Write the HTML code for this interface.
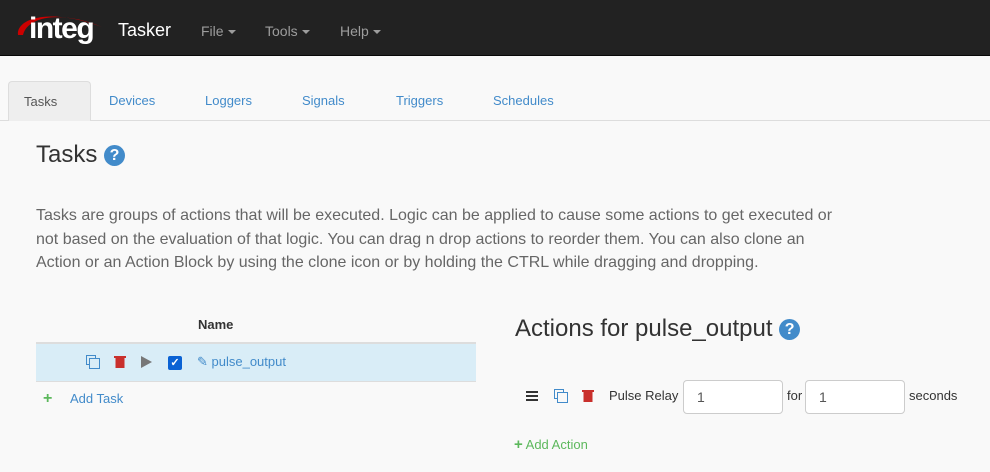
<!DOCTYPE html>
<html><head><style>
*{box-sizing:border-box;margin:0;padding:0}
body{width:990px;height:472px;overflow:hidden;background:#f9f9f9;font-family:"Liberation Sans",Arial,sans-serif;position:relative}
.nav{position:absolute;left:0;top:0;width:990px;height:56px;background:#222;border-bottom:1px solid #080808}
.nav span{position:absolute;color:#9d9d9d;font-size:14px;top:23px}
.caret{display:inline-block;width:0;height:0;border-left:4px solid transparent;border-right:4px solid transparent;border-top:4px solid #9d9d9d;vertical-align:middle;margin-left:4px}
.tabs{position:absolute;left:0;top:120px;width:990px;border-top:1px solid #ddd}
.tab{position:absolute;top:93px;font-size:13px;color:#428bca}
.a{position:absolute}
.blue{color:#428bca}
.help{display:inline-block;width:21px;height:21px;border-radius:50%;background:#428bca;color:#fff;font-weight:bold;font-size:16px;text-align:center;line-height:21px;vertical-align:2px}
input{position:absolute;height:34px;border:1px solid #ccc;border-radius:4px;background:#fff;font:14px "Liberation Sans",sans-serif;padding-left:13px;color:#555}
</style></head><body>
<div class="nav">
<svg class="a" style="left:14px;top:5px" width="90" height="44" viewBox="0 0 90 44"><path d="M4 30 C2 14 34 2 88 22 C50 6 14 10 9 30 Z" fill="#c00"/></svg>
<div class="a" style="left:29px;top:12px;color:#fff;font-size:30px;font-weight:bold;letter-spacing:-1.5px">integ</div>
<div class="a" style="left:118px;top:20px;color:#fff;font-size:18px">Tasker</div>
<span style="left:201px">File<i class="caret"></i></span>
<span style="left:265px">Tools<i class="caret"></i></span>
<span style="left:340px">Help<i class="caret"></i></span>
</div>
<div class="tabs"></div>
<div class="a" style="left:8px;top:81px;width:83px;height:40px;background:#eee;border:1px solid #ddd;border-bottom:none;border-radius:4px 4px 0 0;font-size:13px;color:#555;padding:12px 0 0 15px">Tasks</div>
<div class="tab" style="left:109px">Devices</div>
<div class="tab" style="left:205px">Loggers</div>
<div class="tab" style="left:302px">Signals</div>
<div class="tab" style="left:396px">Triggers</div>
<div class="tab" style="left:493px">Schedules</div>
<div class="a" style="left:36px;top:141px;font-size:24px;color:#333">Tasks <span class="help">?</span></div>
<div class="a" style="left:36px;top:204px;width:810px;font-size:16px;line-height:23.5px;color:#666">Tasks are groups of actions that will be executed. Logic can be applied to cause some actions to get executed or not based on the evaluation of that logic. You can drag n drop actions to reorder them. You can also clone an Action or an Action Block by using the clone icon or by holding the CTRL while dragging and dropping.</div>
<div class="a" style="left:198px;top:317px;font-size:13px;font-weight:bold;color:#333">Name</div>
<div class="a" style="left:36px;top:342px;width:440px;height:40px;background:#d9edf7;border-top:2px solid #ddd;border-bottom:1px solid #ddd"></div>
<svg class="a" style="left:86px;top:355px" width="14" height="14"><rect x="0.5" y="0.5" width="9" height="9" fill="none" stroke="#428bca"/><rect x="3.5" y="3.5" width="10" height="10" fill="#d9edf7" stroke="#428bca"/></svg>
<svg class="a" style="left:114px;top:355px" width="12" height="13"><rect x="0" y="1" width="12" height="2" fill="#c9302c"/><rect x="1.5" y="3" width="9" height="10" fill="#c9302c"/></svg>
<svg class="a" style="left:141px;top:356px" width="11" height="12"><path d="M0 0 L11 6 L0 12Z" fill="#777"/></svg>
<div class="a" style="left:168px;top:356px;width:14px;height:14px;background:#0a62d4;border-radius:2px;color:#fff;font-size:11px;text-align:center;line-height:14px;font-weight:bold">✓</div>
<div class="a blue" style="left:197px;top:354px;font-size:13px">✎ pulse_output</div>
<div class="a" style="left:43px;top:390px;color:#5cb85c;font-size:16px;font-weight:bold">+</div>
<div class="a blue" style="left:70px;top:391px;font-size:13px">Add Task</div>
<div class="a" style="left:515px;top:315px;font-size:24px;color:#333">Actions for pulse_output <span class="help">?</span></div>
<svg class="a" style="left:526px;top:391px" width="12" height="10"><rect y="0" width="12" height="2" fill="#333"/><rect y="4" width="12" height="2" fill="#333"/><rect y="8" width="12" height="2" fill="#333"/></svg>
<svg class="a" style="left:554px;top:389px" width="14" height="14"><rect x="0.5" y="0.5" width="9" height="9" fill="none" stroke="#428bca"/><rect x="3.5" y="3.5" width="10" height="10" fill="#f9f9f9" stroke="#428bca"/></svg>
<svg class="a" style="left:582px;top:389px" width="12" height="13"><rect x="0" y="1" width="12" height="2" fill="#c9302c"/><rect x="1.5" y="3" width="9" height="10" fill="#c9302c"/></svg>
<div class="a" style="left:609px;top:388px;font-size:13px;color:#333">Pulse Relay</div>
<input style="left:683px;top:380px;width:100px" value="1">
<div class="a" style="left:787px;top:388px;font-size:13px;color:#333">for</div>
<input style="left:805px;top:380px;width:100px" value="1">
<div class="a" style="left:909px;top:388px;font-size:13px;color:#333">seconds</div>
<div class="a" style="left:514px;top:436px;font-size:13px;color:#5cb85c"><b style="font-size:15px">+</b> Add Action</div>
</body></html>
